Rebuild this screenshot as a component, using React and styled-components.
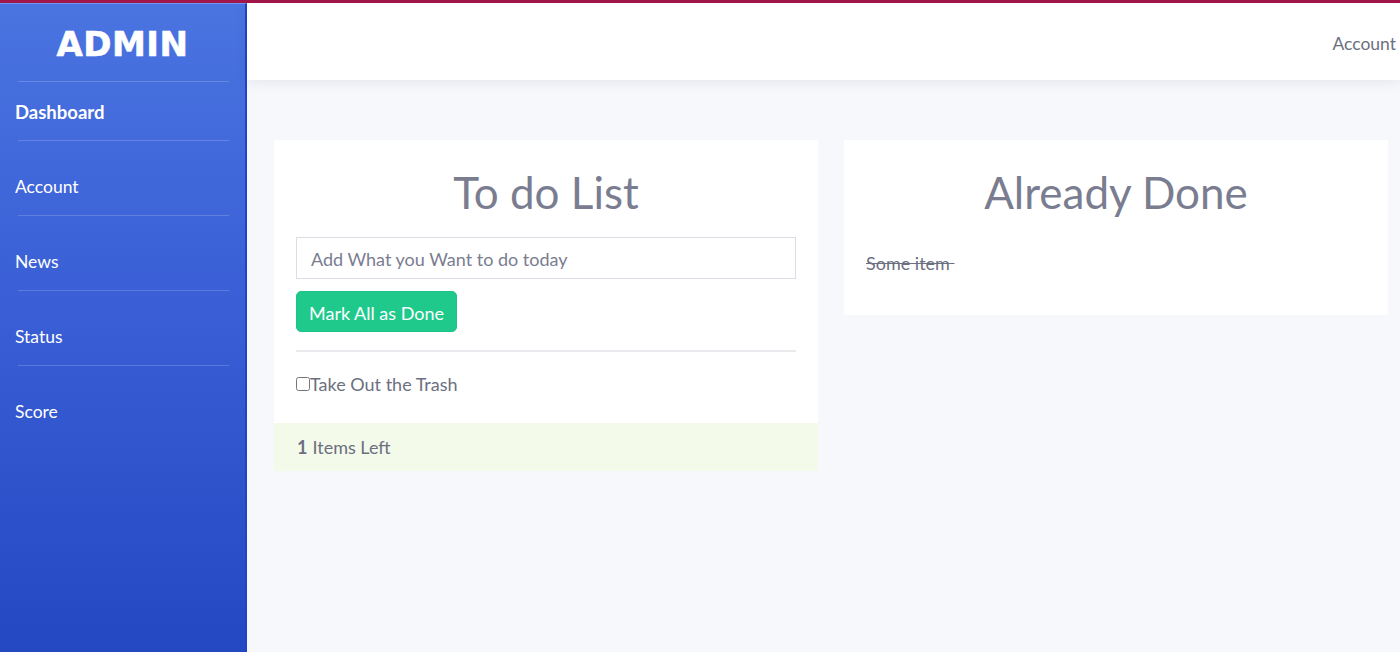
import styled, { createGlobalStyle } from "styled-components";

const GlobalStyle = createGlobalStyle`
  html, body {
    margin: 0;
    padding: 0;
    height: 100%;
  }
  body {
    font-family: Lato, "Noto Sans", sans-serif;
    background: #f7f8fc;
    overflow: hidden;
  }
  #root {
    height: 100%;
  }
`

const PageStyled = styled.div`
  display: flex;
  flex-direction: column;
  height: 100vh;
  border-top: 3px solid #a3164b;
  box-sizing: border-box;
`
const LayoutStyled = styled.div`
  display: flex;
  flex: 1;
  min-height: 0;
`
const SidebarStyled = styled.nav`
  width: 247px;
  flex-shrink: 0;
  box-sizing: border-box;
  background: linear-gradient(180deg, #4a74e0 0%, #3a5fd6 45%, #2448c1 100%);
  border-top: 1px solid #6e94f5;
  border-right: 2px solid #1f43c9;
  display: flex;
  flex-direction: column;
  align-items: center;
`
const LogoStyled = styled.div`
  font-family: "DejaVu Sans", sans-serif;
  font-weight: 700;
  font-size: 34px;
  color: #ffffff;
  letter-spacing: 0.5px;
  height: 77px;
  line-height: 80px;
  text-align: center;
  -webkit-text-stroke: 0.6px #ffffff;
`
const NavGroupStyled = styled.div`
  align-self: stretch;
  display: flex;
  flex-direction: column;
  align-items: center;
`
const SeparatorStyled = styled.div`
  width: 211px;
  height: 1px;
  margin-left: 2px;
  background: rgba(255, 255, 255, 0.18);
`
const NavItemStyled = styled.a`
  display: block;
  align-self: stretch;
  padding: ${(p) => (p.$active ? "19px" : "35px")} 15px 17px;
  font-size: ${(p) => (p.$active ? "18.5px" : "17.5px")};
  line-height: 22px;
  font-weight: ${(p) => (p.$active ? 700 : 400)};
  color: #ffffff;
  text-decoration: none;
`
const MainStyled = styled.main`
  flex: 1;
  display: flex;
  flex-direction: column;
  min-width: 0;
`
const HeaderStyled = styled.header`
  height: 77px;
  flex-shrink: 0;
  background: #ffffff;
  box-shadow: 0 3px 12px rgba(30, 40, 80, 0.08);
  display: flex;
  align-items: center;
  justify-content: flex-end;
  padding: 3px 4px 0 0;
  box-sizing: border-box;
`
const HeaderLinkStyled = styled.a`
  font-size: 17.5px;
  color: #6c6f80;
  text-decoration: none;
`
const ContentStyled = styled.div`
  display: flex;
  align-items: flex-start;
  gap: 26px;
  padding: 60px 0 0 27px;
`
const CardStyled = styled.section`
  width: 544px;
  flex-shrink: 0;
  background: #ffffff;
`
const CardBodyStyled = styled.div`
  padding: 22px 22px ${(p) => p.$bottom || "28px"};
`
const TitleStyled = styled.h1`
  margin: 0 0 15px;
  font-size: 44px;
  line-height: 60px;
  font-weight: 400;
  text-align: center;
  color: #7a7d90;
`
const InputStyled = styled.input`
  display: block;
  width: 100%;
  box-sizing: border-box;
  height: 42px;
  padding: 2px 14px 0;
  border: 1px solid #dcdde4;
  font-family: inherit;
  font-size: 18px;
  color: #6c6f80;
  outline: none;
  &::placeholder {
    color: #7a7d90;
  }
`
const ButtonStyled = styled.button`
  margin-top: 12px;
  height: 41px;
  padding: 2px 12px 0;
  border: 1px solid #1bc487;
  border-radius: 5px;
  background: #1ec98b;
  color: #ffffff;
  font-family: inherit;
  font-size: 18px;
`
const DividerStyled = styled.hr`
  margin: 18px 0 0;
  border: 0;
  border-top: 2px solid #e9e9ee;
`
const TodoItemStyled = styled.label`
  display: flex;
  align-items: center;
  margin-top: 21px;
  font-size: 18px;
  line-height: 22px;
  color: #6c6f80;
  input {
    margin: 0;
    width: 14px;
    height: 14px;
  }
`
const FooterStyled = styled.div`
  height: 48px;
  padding: 0 23px;
  display: flex;
  align-items: center;
  background: #f3faea;
  font-size: 18px;
  color: #6c6f80;
  strong {
    font-weight: 700;
    margin-right: 5px;
  }
`
const DoneItemStyled = styled.div`
  margin-top: 30px;
  font-size: 18px;
  line-height: 22px;
  color: #6c6f80;
  text-decoration: line-through;
`

const navItems = ["Account", "News", "Status", "Score"]

export default function App() {
    return (
        <>
            <GlobalStyle/>
            <PageStyled>
                <LayoutStyled>
                    <SidebarStyled>
                        <LogoStyled>ADMIN</LogoStyled>
                        <SeparatorStyled/>
                        <NavItemStyled $active href="#">Dashboard</NavItemStyled>
                        {navItems.map((item) => (
                            <NavGroupStyled key={item}>
                                <SeparatorStyled/>
                                <NavItemStyled href="#">{item}</NavItemStyled>
                            </NavGroupStyled>
                        ))}
                    </SidebarStyled>

                    <MainStyled>
                        <HeaderStyled>
                            <HeaderLinkStyled href="#">Account</HeaderLinkStyled>
                        </HeaderStyled>

                        <ContentStyled>
                            <CardStyled>
                                <CardBodyStyled>
                                    <TitleStyled>To do List</TitleStyled>
                                    <InputStyled placeholder="Add What you Want to do today"/>
                                    <ButtonStyled>Mark All as Done</ButtonStyled>
                                    <DividerStyled/>
                                    <TodoItemStyled>
                                        <input type="checkbox"/>Take Out the Trash
                                    </TodoItemStyled>
                                </CardBodyStyled>
                                <FooterStyled>
                                    <strong>1</strong> Items Left
                                </FooterStyled>
                            </CardStyled>

                            <CardStyled>
                                <CardBodyStyled $bottom="41px">
                                    <TitleStyled>Already Done</TitleStyled>
                                    <DoneItemStyled>Some item{"\u00a0"}</DoneItemStyled>
                                </CardBodyStyled>
                            </CardStyled>
                        </ContentStyled>
                    </MainStyled>
                </LayoutStyled>
            </PageStyled>
        </>
    )
}
